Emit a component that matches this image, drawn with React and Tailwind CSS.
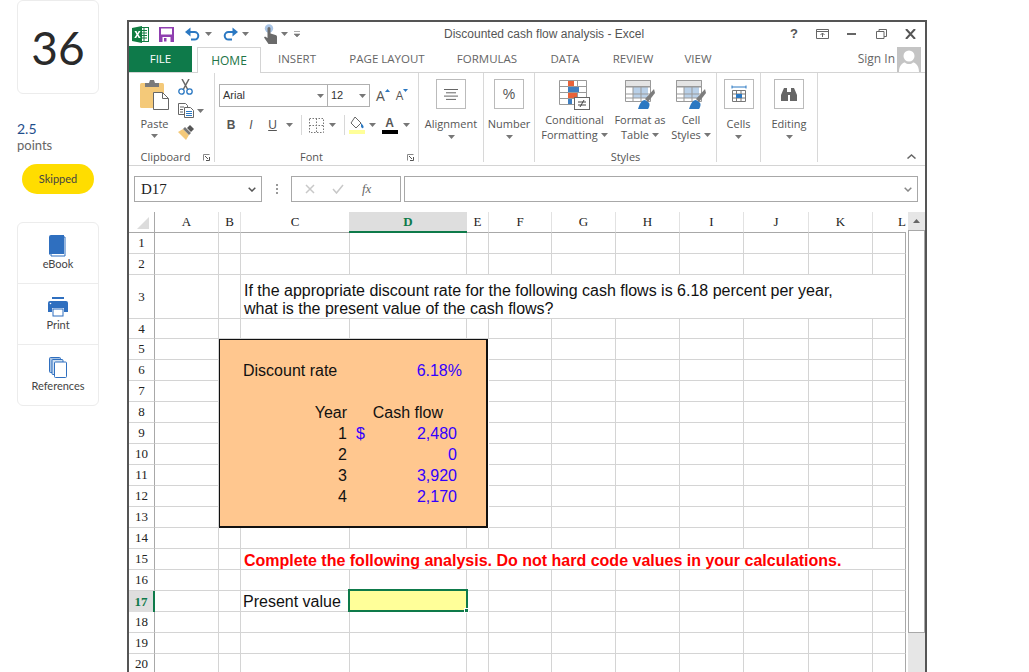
const rowHeaders = Array.from({ length: 20 }, (_, i) => i + 1)
const colHeaders = ["A", "B", "C", "D", "E", "F", "G", "H", "I", "J", "K", "L"]

// cells placed by hand in the sheet, everything else gets auto placed around them
const isTaken = (row, col) => {
  if (row === 3 && col >= 2) return true
  if (row >= 5 && row <= 13 && col >= 1 && col <= 4) return true
  if (row === 15 && col >= 2) return true
  if (row === 17 && (col === 2 || col === 3)) return true
  return false
}

const Caret = ({ className = "" }) => (
  <svg width="7" height="4" viewBox="0 0 7 4" className={className}>
    <path d="M0 0h7L3.5 4z" fill="#777" />
  </svg>
)

const ExcelIcon = () => (
  <svg width="17" height="17" viewBox="0 0 17 17">
    <rect x="6" y="1.5" width="10.5" height="14" fill="#fff" stroke="#107c41" />
    <path d="M9 4.5h6M9 7h6M9 9.5h6M9 12h6M12 2v13" stroke="#107c41" strokeWidth="1" />
    <path d="M0 2l10-2v17L0 15z" fill="#107c41" />
    <path d="M2.5 5h2l1 2.3L6.6 5h1.9L6.4 8.5l2.2 3.6H6.6L5.4 9.7l-1.2 2.4H2.3l2.2-3.6z" fill="#fff" />
  </svg>
)

const SaveIcon = () => (
  <svg width="15" height="15" viewBox="0 0 15 15">
    <path d="M0 0h15v15H0z" fill="#8f3fb0" />
    <path d="M2 1.5h11v6H2z" fill="#fff" />
    <path d="M3.5 10h8v5h-8z" fill="#fff" />
    <path d="M5 11h2.5v3.5H5z" fill="#8f3fb0" />
  </svg>
)

const UndoIcon = ({ flip }) => (
  <svg width="15" height="14" viewBox="0 0 15 14" className={flip ? "-scale-x-100" : ""}>
    <path d="M3 5h6.5a3.8 3.8 0 0 1 0 7.6H6" fill="none" stroke="#2b78c2" strokeWidth="2" />
    <path d="M5.5 0.5v9L0 5z" fill="#2b78c2" />
  </svg>
)

const TouchIcon = () => (
  <svg width="14" height="20" viewBox="0 0 14 20">
    <circle cx="5" cy="4.5" r="4.2" fill="#a9c4e4" />
    <path d="M3.5 4.5a1.5 1.5 0 0 1 3 0v5l5 1.5c1 .4 1.5 1 1.5 2V20H4.500L0 13.500l1-1 2.500 1.500z" fill="#6a6a6a" />
  </svg>
)

const PasteIcon = () => (
  <svg width="29" height="30" viewBox="0 0 29 30">
    <rect x="0" y="3" width="24" height="25" rx="1.500" fill="#f4c979" />
    <path d="M5 3h4l1-3h4l1 3h4v4H5z" fill="#7a7a7a" />
    <path d="M13.500 12.500h9l6 6v11h-15z" fill="#fff" stroke="#666" />
    <path d="M22.500 12.500v6h6" fill="none" stroke="#666" />
  </svg>
)

const ScissorsIcon = () => (
  <svg width="15" height="16" viewBox="0 0 15 16">
    <path d="M4 0l6 11M11 0L5 11" stroke="#666" strokeWidth="1.500" />
    <circle cx="3.500" cy="12.500" r="2.700" fill="none" stroke="#2b78c2" strokeWidth="1.300" />
    <circle cx="11.500" cy="12.500" r="2.700" fill="none" stroke="#2b78c2" strokeWidth="1.300" />
  </svg>
)

const CopyIcon = () => (
  <svg width="16" height="15" viewBox="0 0 16 15">
    <path d="M.5.500h7l2 2v9h-9z" fill="#fff" stroke="#666" />
    <path d="M6.500 4.500h6l3 3v7h-9z" fill="#fff" stroke="#666" />
    <path d="M2 4h4M2 6.500h3M2 9h3" stroke="#666" />
    <path d="M8 8.500h6M8 10.500h6M8 12.500h6" stroke="#2b78c2" />
  </svg>
)

const BrushIcon = () => (
  <svg width="17" height="15" viewBox="0 0 17 15">
    <path d="M0 7l5-3 6 6-3 5z" fill="#f4c979" />
    <path d="M5 4l6 6 2-2-6-6z" fill="#777" />
    <path d="M9 3l3-3 4 4-3 3z" fill="#555" />
  </svg>
)

const BorderIcon = () => (
  <svg width="15" height="15" viewBox="0 0 15 15">
    <path
      d="M.5.500h14v14H.5zM7.500.500v14M.5 7.500h14"
      fill="none"
      stroke="#777"
      strokeDasharray="1.500 1.500"
    />
  </svg>
)

const FillIcon = () => (
  <svg width="16" height="18" viewBox="0 0 16 18">
    <path d="M6 1l6 6-5 5-5-5z" fill="#fff" stroke="#666" />
    <path d="M12 7c1.500 1.500 3 3 2.500 4.500S12 12 12 10z" fill="#2b78c2" />
    <rect x="0" y="14" width="16" height="4" fill="#ffff99" />
  </svg>
)

const AlignIcon = () => (
  <svg width="14" height="11" viewBox="0 0 14 11">
    <path d="M0 .500h14M2 3.800h10M0 7.100h14M2 10.400h10" stroke="#666" />
  </svg>
)

const CondIcon = () => (
  <svg width="31" height="30" viewBox="0 0 31 30">
    <path d="M.5.500h27v24H.5zM9.500.500v24M18.500.500v24M.5 6.500h27M.5 12.500h27M.5 18.500h27" fill="none" stroke="#999" />
    <rect x="9" y="1" width="6" height="5" fill="#e8623a" />
    <rect x="9" y="7" width="11" height="5" fill="#3f7fc1" />
    <rect x="9" y="13" width="9" height="5" fill="#e8623a" />
    <rect x="9" y="19" width="4" height="5" fill="#3f7fc1" />
    <rect x="15.500" y="17.500" width="15" height="12" fill="#fff" stroke="#666" />
    <path d="M19 22h8M19 25h8M25 20l-4 7" stroke="#444" />
  </svg>
)

const TableIcon = () => (
  <svg width="30" height="30" viewBox="0 0 30 30">
    <rect x="8" y="7" width="15" height="11" fill="#b9d0e8" />
    <path d="M.5.500h25v21H.5zM8 .500v21M16 .500v21M.5 7h25M.5 14h25M.5 18h25" fill="none" stroke="#999" />
    <path d="M.5.500h25v6H.5z" fill="#e4e4e4" stroke="#999" />
    <path d="M29 9l-9 10 3 3 7-9z" fill="#7c7c7c" />
    <path d="M20 20c-3 0-5 3-7 9h10c2-3 2-6 0-7z" fill="#2b78c2" />
  </svg>
)

const CellsIcon = () => (
  <svg width="16" height="18" viewBox="0 0 16 18">
    <path d="M1 2h14M1 .500v3M15 .500v3" stroke="#2b78c2" />
    <path d="M1.500 5.500h13v11h-13zM5.500 5.500v11M10 5.500v11M1.500 9h13M1.500 13h13" fill="none" stroke="#777" />
    <rect x="5" y="9" width="6" height="4" fill="#2b78c2" />
  </svg>
)

const BinocularsIcon = () => (
  <svg width="16" height="14" viewBox="0 0 16 14">
    <path d="M3 1h3v4h1v9H0V8zM13 1h-3v4H9v9h7V8z" fill="#666" />
    <rect x="7" y="5" width="2" height="3" fill="#666" />
  </svg>
)

const AvatarIcon = () => (
  <svg width="24" height="25" viewBox="0 0 24 25">
    <rect width="24" height="25" fill="#c4c4c4" />
    <circle cx="12" cy="9" r="5.500" fill="#fff" />
    <path d="M2 25c0-7 4-9.500 6-9.500 2 2 6 2 8 0 2 0 6 2.500 6 9.500z" fill="#fff" />
  </svg>
)

const Launcher = () => (
  <svg width="7" height="7" viewBox="0 0 7 7">
    <path d="M.5 6.500v-6h6" fill="none" stroke="#888" />
    <path d="M2 2l3 3M6.500 3v3.500H3" fill="none" stroke="#555" />
  </svg>
)

const BigBox = ({ label, children }) => (
  <div className="flex flex-col items-center">
    <div className="mt-[6px] w-[30px] h-[30px] border border-[#bbbbbb] flex items-center justify-center">
      {children}
    </div>
    <div className="mt-[7px] leading-[16px]">{label}</div>
    <Caret className="mt-[3px]" />
  </div>
)

const StyleButton = ({ w, icon, top, bottom }) => (
  <div className="flex flex-col items-center" style={{ width: w }}>
    <div className="mt-[7px] h-[30px]">{icon}</div>
    <div className="mt-[2px] leading-[15px] text-center whitespace-nowrap">
      {top}
      <br />
      {bottom}
      <Caret className="inline ml-[3px] mb-[3px]" />
    </div>
  </div>
)

const Group = ({ w, label, labelClass = "", launcher, children }) => (
  <div className="relative flex flex-col h-[89px] shrink-0 border-r border-[#d8d8d8]" style={{ width: w }}>
    <div className="flex-1">{children}</div>
    {label && <div className={`text-center leading-[14px] -mb-[2px] ${labelClass}`}>{label}</div>}
    {launcher && (
      <div className="absolute right-[4px] bottom-[1px]">
        <Launcher />
      </div>
    )}
  </div>
)

function Sidebar() {
  return (
    <div className="w-[127px] shrink-0 pl-[17px] font-['Lato',sans-serif]">
      <div className="w-[82px] h-[94px] rounded-md border border-[#ececec] flex items-center justify-center text-[46px] text-[#2a2a2a]">
        36
      </div>
      <div className="mt-[26px] text-[14px] leading-[17px] text-[#1f4e8c]">2.5</div>
      <div className="text-[13px] leading-[17px] text-[#666666]">points</div>
      <div className="mt-[10px] ml-[5px] w-[72px] h-[30px] rounded-full bg-[#ffdd00] flex items-center justify-center text-[11px] text-[#444444]">
        Skipped
      </div>
      <div className="mt-[28px] w-[82px] rounded-md border border-[#ececec] text-[11px] text-[#444444]">
        <div className="h-[61px] flex flex-col items-center pt-[12px] border-b border-[#ececec]">
          <svg width="18" height="22" viewBox="0 0 18 22">
            <path d="M2 2h14v19H2z" fill="#fff" stroke="#2f6fbf" />
            <path d="M0 2a2 2 0 0 1 2-2h13v19H2a2 2 0 0 0-2 1z" fill="#2f6fbf" />
          </svg>
          <div className="leading-[14px]">eBook</div>
        </div>
        <div className="h-[61px] flex flex-col items-center pt-[13px] border-b border-[#ececec]">
          <svg width="20" height="20" viewBox="0 0 20 20">
            <rect x="4" y="0" width="12" height="2" fill="#2f6fbf" />
            <path d="M2 4h16a2 2 0 0 1 2 2v9h-4v-4H4v4H0V6a2 2 0 0 1 2-2z" fill="#2f6fbf" />
            <rect x="5" y="12" width="10" height="7" fill="#fff" stroke="#2f6fbf" />
            <circle cx="2.500" cy="6.500" r="0.800" fill="#fff" />
          </svg>
          <div className="mt-[1px] leading-[14px]">Print</div>
        </div>
        <div className="h-[60px] flex flex-col items-center pt-[12px]">
          <svg width="18" height="21" viewBox="0 0 18 21">
            <rect x="0.500" y="0.500" width="11" height="15" rx="1" fill="#a9c4e4" stroke="#2f6fbf" />
            <rect x="3" y="2.500" width="11" height="15" rx="1" fill="#cfe0f2" stroke="#2f6fbf" />
            <rect x="5.500" y="5" width="12" height="15.500" rx="1" fill="#fff" stroke="#2f6fbf" />
          </svg>
          <div className="mt-[1px] leading-[14px]">References</div>
        </div>
      </div>
    </div>
  )
}

function TitleBar() {
  return (
    <div className="h-[24px] flex items-center shrink-0">
      <div className="w-[315px] flex items-center pl-[3px]">
        <ExcelIcon />
        <div className="ml-[10px]"><SaveIcon /></div>
        <div className="ml-[11px]"><UndoIcon /></div>
        <Caret className="ml-[5px]" />
        <div className="ml-[11px]"><UndoIcon flip /></div>
        <Caret className="ml-[4px]" />
        <div className="ml-[15px]"><TouchIcon /></div>
        <Caret className="ml-[3px]" />
        <svg width="6" height="7" viewBox="0 0 6 7" className="ml-[6px]">
          <path d="M0 .500h6M0 3h6l-3 3z" fill="#777" stroke="#777" strokeWidth="0.600" />
        </svg>
      </div>
      <div className="font-['Liberation_Sans',sans-serif] text-[12px] text-[#555555]">
        Discounted cash flow analysis - Excel
      </div>
      <div className="ml-auto flex items-center text-[#555555]">
        <span className="font-['Liberation_Sans',sans-serif] font-bold text-[13px] mr-[18px]">?</span>
        <svg width="13" height="10" viewBox="0 0 13 10" className="mr-[18px]">
          <path d="M.5.500h12v9H.5zM.5 2.500h12" fill="none" stroke="#666" />
          <path d="M6.500 4v4M4.500 6l2-2 2 2" fill="none" stroke="#666" />
        </svg>
        <svg width="9" height="2" viewBox="0 0 9 2" className="mr-[20px]">
          <rect width="9" height="2" fill="#666" />
        </svg>
        <svg width="11" height="10" viewBox="0 0 11 10" className="mr-[18px]">
          <path d="M.5 2.500h7.500v7H.5zM3 2.500V.500h7.500v7H8" fill="none" stroke="#666" />
        </svg>
        <svg width="11" height="10" viewBox="0 0 11 10" className="mr-[9px]">
          <path d="M1 0l9 10M10 0L1 10" stroke="#555" strokeWidth="2" />
        </svg>
      </div>
    </div>
  )
}

function TabsRow() {
  return (
    <div className="h-[27px] shrink-0 flex items-end border-b border-[#d4d4d4] font-['Open_Sans',sans-serif] text-[11.5px] text-[#666666]">
      <div className="w-[63px] h-[26px] bg-[#0e7a4a] text-white flex items-center justify-center">FILE</div>
      <div className="ml-[5px] w-[64px] h-[26px] -mb-px border border-b-0 border-[#d4d4d4] bg-white text-[#217346] flex items-center justify-center text-[12px]">
        HOME
      </div>
      <div className="w-[72px] h-[26px] flex items-center justify-center">INSERT</div>
      <div className="w-[108px] h-[26px] flex items-center justify-center">PAGE LAYOUT</div>
      <div className="w-[92px] h-[26px] flex items-center justify-center">FORMULAS</div>
      <div className="w-[64px] h-[26px] flex items-center justify-center">DATA</div>
      <div className="w-[72px] h-[26px] flex items-center justify-center">REVIEW</div>
      <div className="w-[58px] h-[26px] flex items-center justify-center">VIEW</div>
      <div className="ml-auto mr-[4px] h-[26px] flex items-center">
        <span className="mr-[2px] text-[12px]">Sign In</span>
        <AvatarIcon />
      </div>
    </div>
  )
}

function Ribbon() {
  return (
    <div className="h-[93px] shrink-0 flex items-start border-b border-[#d4d4d4] font-['Open_Sans',sans-serif] text-[11px] text-[#555555]">
      <Group w={86} label="Clipboard" labelClass="pr-[12px]" launcher>
        <div className="flex">
          <div className="ml-[11px] w-[29px] flex flex-col items-center">
            <div className="mt-[7px] h-[30px]"><PasteIcon /></div>
            <div className="mt-[6px] leading-[16px]">Paste</div>
            <Caret className="mt-[2px]" />
          </div>
          <div className="ml-[9px] flex flex-col items-start">
            <div className="mt-[6px]"><ScissorsIcon /></div>
            <div className="mt-[8px] flex items-center">
              <CopyIcon />
              <Caret className="ml-[3px]" />
            </div>
            <div className="mt-[7px]"><BrushIcon /></div>
          </div>
        </div>
      </Group>
      <Group w={204} label="Font" labelClass="pr-[10px]" launcher>
        <div className="mt-[11px] ml-[4px] flex items-center">
          <div className="w-[109px] h-[23px] border border-[#b0b0b0] flex items-center justify-between px-[3px] font-['Liberation_Sans',sans-serif] text-[11px] text-[#333333]">
            Arial
            <Caret />
          </div>
          <div className="w-[43px] h-[23px] -ml-px border border-[#b0b0b0] flex items-center justify-between px-[3px] font-['Liberation_Sans',sans-serif] text-[11px] text-[#333333]">
            12
            <Caret />
          </div>
          <span className="ml-[6px] text-[14px] text-[#555555] leading-none">A</span>
          <svg width="5" height="3" viewBox="0 0 5 3" className="mb-[10px]"><path d="M0 3h5L2.500 0z" fill="#2b78c2" /></svg>
          <span className="ml-[6px] text-[12px] text-[#555555] leading-none">A</span>
          <svg width="5" height="3" viewBox="0 0 5 3" className="mb-[10px]"><path d="M0 0h5L2.500 3z" fill="#2b78c2" /></svg>
        </div>
        <div className="mt-[8px] ml-[7px] flex items-center h-[20px] font-['Liberation_Sans',sans-serif] text-[#555555]">
          <span className="w-[18px] text-center font-bold text-[12px]">B</span>
          <span className="w-[22px] text-center italic text-[12px]">I</span>
          <span className="w-[21px] text-center underline text-[12px]">U</span>
          <span className="w-[12px] flex justify-center"><Caret /></span>
          <span className="w-[12px] flex justify-center"><span className="w-px h-[20px] bg-[#d8d8d8]" /></span>
          <span className="w-[18px] flex justify-center"><BorderIcon /></span>
          <span className="w-[14px] flex justify-center"><Caret /></span>
          <span className="w-[10px] flex justify-center"><span className="w-px h-[20px] bg-[#d8d8d8]" /></span>
          <span className="w-[16px] flex justify-center"><FillIcon /></span>
          <span className="w-[14px] flex justify-center"><Caret /></span>
          <span className="w-[21px] flex flex-col items-center">
            <span className="text-[12px] font-bold leading-[13px]">A</span>
            <span className="w-[16px] h-[4px] bg-black" />
          </span>
          <span className="w-[12px] flex justify-center"><Caret /></span>
        </div>
      </Group>
      <Group w={65}>
        <BigBox label="Alignment"><AlignIcon /></BigBox>
      </Group>
      <Group w={51}>
        <BigBox label="Number">
          <span className="font-['Liberation_Sans',sans-serif] text-[14px]">%</span>
        </BigBox>
      </Group>
      <Group w={182} label="Styles">
        <div className="flex">
          <StyleButton w={79} icon={<CondIcon />} top="Conditional" bottom="Formatting" />
          <StyleButton w={52} icon={<TableIcon />} top="Format as" bottom="Table" />
          <StyleButton w={50} icon={<TableIcon />} top="Cell" bottom="Styles" />
        </div>
      </Group>
      <Group w={44}>
        <BigBox label="Cells"><CellsIcon /></BigBox>
      </Group>
      <Group w={57}>
        <BigBox label="Editing"><BinocularsIcon /></BigBox>
      </Group>
      <div className="flex-1 h-[89px] flex items-end justify-end pr-[9px] pb-[3px]">
        <svg width="9" height="5" viewBox="0 0 9 5">
          <path d="M.5 4.500l4-3.500 4 3.500" fill="none" stroke="#666" strokeWidth="1.500" />
        </svg>
      </div>
    </div>
  )
}

function FormulaBar() {
  return (
    <div className="mt-[10px] h-[26px] shrink-0 flex items-stretch pl-[5px]">
      <div className="w-[128px] border border-[#a8a8a8] flex items-center justify-between pl-[6px] pr-[5px] font-['Liberation_Serif',serif] text-[15px] text-[#222222]">
        D17
        <svg width="8" height="5" viewBox="0 0 8 5">
          <path d="M.7.700L4 4l3.300-3.300" fill="none" stroke="#555" strokeWidth="1.500" />
        </svg>
      </div>
      <div className="w-[29px] flex flex-col items-center justify-center gap-[2px]">
        <span className="w-[2px] h-[2px] bg-[#999999]" />
        <span className="w-[2px] h-[2px] bg-[#999999]" />
        <span className="w-[2px] h-[2px] bg-[#999999]" />
      </div>
      <div className="w-[110px] border border-[#a8a8a8] flex items-center">
        <svg width="10" height="10" viewBox="0 0 10 10" className="ml-[13px]">
          <path d="M1 1l8 8M9 1l-8 8" stroke="#c8c8c8" strokeWidth="1.500" />
        </svg>
        <svg width="12" height="10" viewBox="0 0 12 10" className="ml-[17px]">
          <path d="M1 5l3.500 4L11 1" fill="none" stroke="#c8c8c8" strokeWidth="1.500" />
        </svg>
        <span className="ml-[18px] font-['Liberation_Serif',serif] italic text-[13px] text-[#666666]">fx</span>
      </div>
      <div className="ml-[3px] w-[514px] border border-[#a8a8a8] flex items-center justify-end pr-[5px]">
        <svg width="8" height="5" viewBox="0 0 8 5">
          <path d="M.7.700L4 4l3.300-3.300" fill="none" stroke="#888" strokeWidth="1.500" />
        </svg>
      </div>
    </div>
  )
}

function OrangeBox() {
  return (
    <div className="col-start-3 col-end-7 row-start-6 row-end-15 -ml-px mr-px -mt-px pt-px bg-[#ffc78f] shadow-[inset_0_0_0_2px_#111111] grid grid-cols-[22px_109px_117px_22px] grid-rows-[repeat(9,21px)] text-[16px] leading-[21px] text-[#111111] whitespace-nowrap">
      <div className="col-start-2 row-start-2 pl-[3px]">Discount rate</div>
      <div className="col-start-3 row-start-2 text-right pr-[4px] text-[#3300ff]">6.18%</div>
      <div className="col-start-2 row-start-4 text-right pr-[2px]">Year</div>
      <div className="col-start-3 row-start-4 text-right pr-[23px]">Cash flow</div>
      <div className="col-start-2 row-start-5 text-right pr-[2px]">1</div>
      <div className="col-start-3 row-start-5 flex justify-between pl-[7px] pr-[9px] text-[#3300ff]">
        <span>$</span>
        <span>2,480</span>
      </div>
      <div className="col-start-2 row-start-6 text-right pr-[2px]">2</div>
      <div className="col-start-3 row-start-6 text-right pr-[9px] text-[#3300ff]">0</div>
      <div className="col-start-2 row-start-7 text-right pr-[2px]">3</div>
      <div className="col-start-3 row-start-7 text-right pr-[9px] text-[#3300ff]">3,920</div>
      <div className="col-start-2 row-start-8 text-right pr-[2px]">4</div>
      <div className="col-start-3 row-start-8 text-right pr-[9px] text-[#3300ff]">2,170</div>
    </div>
  )
}

function Sheet() {
  return (
    <div className="mt-[10px] flex items-start">
      <div className="w-[777px] grid grid-cols-[26px_64px_22px_109px_117px_22px_63px_64px_64px_64px_65px_64px_33px] grid-rows-[21px_21px_21px_44px_20px_repeat(16,21px)] font-['Liberation_Sans',sans-serif]">
        {/* header row */}
        <div className="flex items-center justify-center border-b border-r border-[#a8a8a8]">
          <svg width="12" height="12" viewBox="0 0 12 12" className="ml-[2px] mt-[2px]">
            <path d="M12 0v12H0z" fill="#dcdcdc" />
          </svg>
        </div>
        {colHeaders.map((c) => (
          <div
            key={c}
            className={
              c === "D"
                ? "-ml-px flex items-center justify-center bg-[#dedede] border-b-2 border-[#0e7a4a] font-['Liberation_Serif',serif] font-bold text-[13px] text-[#0e7a4a]"
                : c === "L"
                  ? "flex items-center justify-end border-b border-b-[#a8a8a8] font-['Liberation_Serif',serif] text-[13px] text-[#222222]"
                  : "flex items-center justify-center border-r border-b border-r-[#e2e2e2] border-b-[#a8a8a8] font-['Liberation_Serif',serif] text-[13px] text-[#222222]"
            }
          >
            {c}
          </div>
        ))}

        {/* cells with content */}
        <div className="col-start-4 col-end-14 row-start-4 border-b border-r border-b-[#d4d4d4] border-r-[#a8a8a8] pl-[3px] pt-[6px] flex items-center text-[16px] leading-[18px] text-[#111111] whitespace-nowrap">
          <div>
            If the appropriate discount rate for the following cash flows is 6.18 percent per year,
            <br />
            what is the present value of the cash flows?
          </div>
        </div>
        <OrangeBox />
        <div className="col-start-4 col-end-14 row-start-16 border-b border-r border-b-[#d4d4d4] border-r-[#a8a8a8] pl-[3px] pt-[4px] flex items-center text-[16px] font-bold text-[#ff0000] whitespace-nowrap">
          Complete the following analysis. Do not hard code values in your calculations.
        </div>
        <div className="col-start-4 row-start-18 border-b border-r border-[#d4d4d4] pl-[2px] pt-[2px] flex items-center text-[16px] text-[#111111] whitespace-nowrap">
          Present value
        </div>
        <div className="relative z-10 col-start-5 row-start-18 -ml-[2px] -mr-px -mt-[2px] bg-[#ffff99] border-2 border-[#0e7a4a]">
          <span className="absolute -right-[3px] -bottom-[3px] w-[5px] h-[5px] bg-[#0e7a4a] border border-white" />
        </div>

        {/* row headers and the empty grid */}
        {rowHeaders.map((r) => [
          <div
            key={`h${r}`}
            style={{ gridRow: r + 1, gridColumn: 1 }}
            className={
              r === 17
                ? "flex items-center justify-center bg-[#dedede] border-r-2 border-[#0e7a4a] font-['Liberation_Serif',serif] font-bold text-[13px] text-[#0e7a4a]"
                : "flex items-center justify-center border-b border-r border-b-[#d4d4d4] border-r-[#a8a8a8] font-['Liberation_Serif',serif] text-[13px] text-[#222222]"
            }
          >
            {r}
          </div>,
          ...colHeaders.map((c, col) =>
            isTaken(r, col) ? null : (
              <div
                key={`${c}${r}`}
                style={{ gridRow: r + 1, gridColumn: col + 2 }}
                className={
                  col === 11
                    ? "border-b border-r border-b-[#d4d4d4] border-r-[#a8a8a8]"
                    : "border-b border-r border-[#d4d4d4]"
                }
              />
            ),
          ),
        ])}
      </div>

      {/* scrollbar */}
      <div className="ml-[2px] w-[17px] h-[460px] flex flex-col bg-[#e6e6e6]">
        <div className="h-[17px] flex items-center justify-center">
          <svg width="7" height="4" viewBox="0 0 7 4"><path d="M0 4h7L3.500 0z" fill="#666" /></svg>
        </div>
        <div className="mt-[1px] h-[403px] bg-white border border-[#a8a8a8]" />
      </div>
    </div>
  )
}

export default function App() {
  return (
    <div className="flex h-[672px] w-[1029px] overflow-hidden bg-white">
      <Sidebar />
      <div className="mt-[20px] w-[800px] h-[652px] shrink-0 flex flex-col border-t-2 border-x-2 border-[#555555] overflow-hidden">
        <TitleBar />
        <TabsRow />
        <Ribbon />
        <FormulaBar />
        <Sheet />
      </div>
    </div>
  )
}
